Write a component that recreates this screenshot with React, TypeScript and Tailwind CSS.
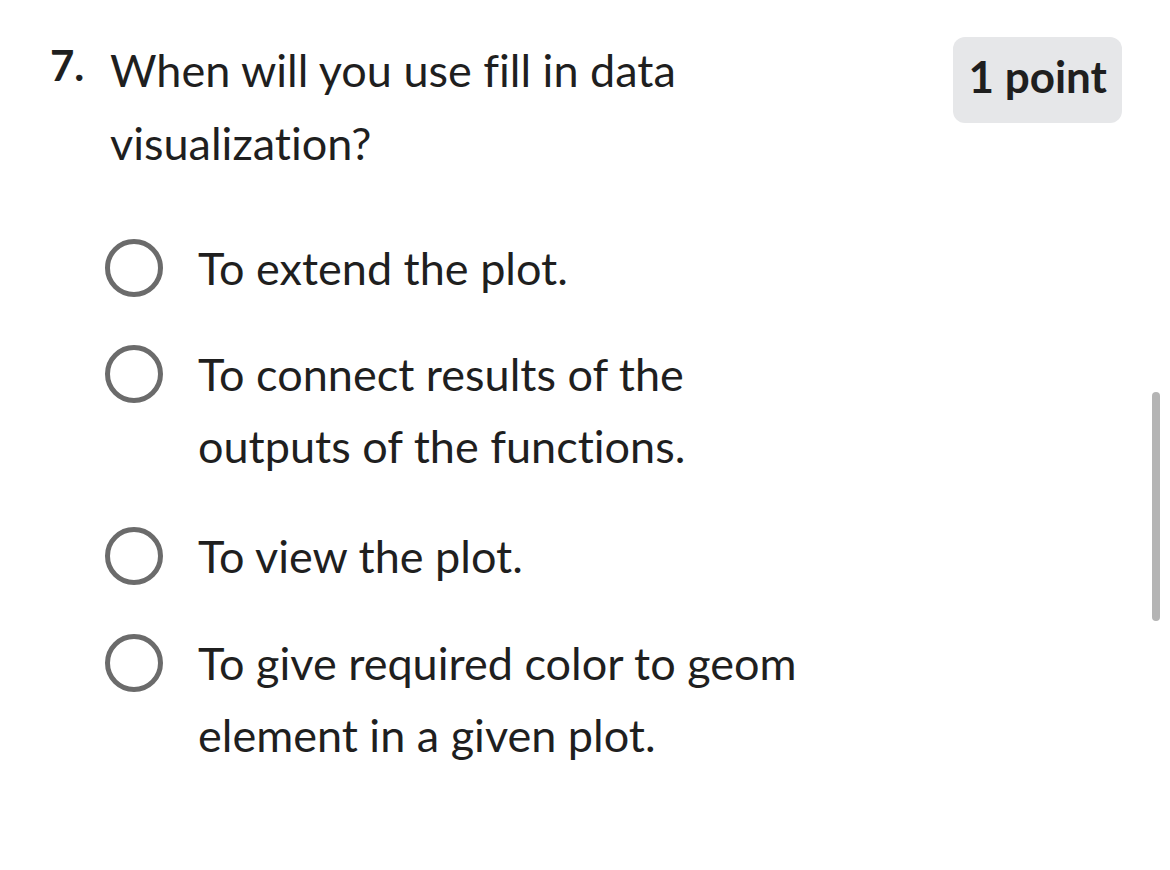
import React from "react";

const options: { lines: string[]; mt: string }[] = [
  { lines: ["To extend the plot."], mt: "mt-[52px]" },
  { lines: ["To connect results of the", "outputs of the functions."], mt: "mt-[34px]" },
  { lines: ["To view the plot."], mt: "mt-[38px]" },
  { lines: ["To give required color to geom", "element in a given plot."], mt: "mt-[35px]" },
];

export default function App() {
  return (
    <div
      className="relative w-[1170px] h-[870px] bg-white text-[#1f1f1f] overflow-hidden [font-variant-ligatures:none]"
      style={{ fontFamily: "Lato, 'Noto Sans', sans-serif" }}
    >
      <div className="pl-[50px] pr-[48px] pt-[34px]">
        <div className="flex items-start justify-between">
          <div className="flex items-start">
            <span className="w-[60px] shrink-0 text-[42px] font-bold leading-[73px] -mt-[5px]">7.</span>
            <div className="text-[45px] leading-[73px]">
              When will you use fill in data
              <br />
              visualization?
            </div>
          </div>
          <div className="mt-[3px] h-[86px] px-[15px] pb-[8px] flex items-center rounded-[12px] bg-[#e6e7e9] text-[44px] font-bold">
            1 point
          </div>
        </div>

        <div className="pl-[55px] flex flex-col">
          {options.map((o, i) => (
            <div key={i} className={`flex items-start ${o.mt}`}>
              <div className="h-[72px] flex items-center shrink-0">
                <div className="w-[58px] h-[58px] rounded-full border-[5px] border-[#6b6b6b]" />
              </div>
              <div className="ml-[35px] text-[45px] leading-[72px]">
                {o.lines.map((l, j) => (
                  <div key={j}>{l}</div>
                ))}
              </div>
            </div>
          ))}
        </div>
      </div>

      <div className="absolute left-[1152px] top-[392px] w-[8px] h-[229px] rounded-full bg-[#b4b4b4]" />
    </div>
  );
}
